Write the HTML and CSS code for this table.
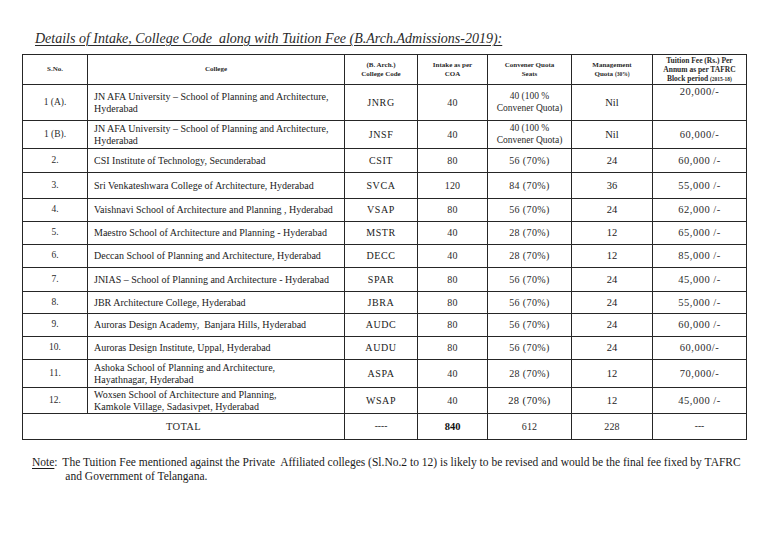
FILE: index.html
```html
<!DOCTYPE html>
<html>
<head>
<meta charset="utf-8">
<link rel="stylesheet" href="styles.css">
</head>
<body>
<div class="page">
  <h1 class="title">Details of Intake, College Code&nbsp; along with Tuition Fee (B.Arch.Admissions-2019):</h1>
  <table class="intake">
    <colgroup>
      <col class="c-sno"><col class="c-college"><col class="c-code"><col class="c-intake"><col class="c-conv"><col class="c-mgmt"><col class="c-fee">
    </colgroup>
    <thead>
      <tr class="h30">
        <th>S.No.</th>
        <th>College</th>
        <th>(B. Arch.)<br>College Code</th>
        <th>Intake as per<br>COA</th>
        <th>Convener Quota<br>Seats</th>
        <th>Management<br>Quota <span class="tiny">(30%)</span></th>
        <th class="fee-h">Tuition Fee (Rs.) Per<br>Annum as per TAFRC<br>Block period <span class="tiny">(2015-18)</span></th>
      </tr>
    </thead>
    <tbody>
      <tr class="h36">
        <td>1 (A).</td>
        <td class="name">JN AFA University – School of Planning and Architecture,<br>Hyderabad</td>
        <td class="code">JNRG</td>
        <td class="num">40</td>
        <td>40 (100 %<br>Convener Quota)</td>
        <td class="big">Nil</td>
        <td class="fee top">20,000/-</td>
      </tr>
      <tr class="h28">
        <td>1 (B).</td>
        <td class="name">JN AFA University – School of Planning and Architecture,<br>Hyderabad</td>
        <td class="code">JNSF</td>
        <td class="num">40</td>
        <td>40 (100 %<br>Convener Quota)</td>
        <td class="big">Nil</td>
        <td class="fee">60,000/-</td>
      </tr>
      <tr class="h24">
        <td>2.</td>
        <td class="name">CSI Institute of Technology, Secunderabad</td>
        <td class="code">CSIT</td>
        <td class="num">80</td>
        <td class="conv">56 (70%)</td>
        <td class="big">24</td>
        <td class="fee">60,000 /-</td>
      </tr>
      <tr class="h26">
        <td>3.</td>
        <td class="name">Sri Venkateshwara College of Architecture, Hyderabad</td>
        <td class="code">SVCA</td>
        <td class="num">120</td>
        <td class="conv">84 (70%)</td>
        <td class="big">36</td>
        <td class="fee">55,000 /-</td>
      </tr>
      <tr class="h23">
        <td>4.</td>
        <td class="name">Vaishnavi School of Architecture and Planning , Hyderabad</td>
        <td class="code">VSAP</td>
        <td class="num">80</td>
        <td class="conv">56 (70%)</td>
        <td class="big">24</td>
        <td class="fee">62,000 /-</td>
      </tr>
      <tr class="h23">
        <td>5.</td>
        <td class="name">Maestro School of Architecture and Planning - Hyderabad</td>
        <td class="code">MSTR</td>
        <td class="num">40</td>
        <td class="conv">28 (70%)</td>
        <td class="big">12</td>
        <td class="fee">65,000 /-</td>
      </tr>
      <tr class="h23">
        <td>6.</td>
        <td class="name">Deccan School of Planning and Architecture, Hyderabad</td>
        <td class="code">DECC</td>
        <td class="num">40</td>
        <td class="conv">28 (70%)</td>
        <td class="big">12</td>
        <td class="fee">85,000 /-</td>
      </tr>
      <tr class="h24">
        <td>7.</td>
        <td class="name">JNIAS – School of Planning and Architecture - Hyderabad</td>
        <td class="code">SPAR</td>
        <td class="num">80</td>
        <td class="conv">56 (70%)</td>
        <td class="big">24</td>
        <td class="fee">45,000 /-</td>
      </tr>
      <tr class="h22">
        <td>8.</td>
        <td class="name">JBR Architecture College, Hyderabad</td>
        <td class="code">JBRA</td>
        <td class="num">80</td>
        <td class="conv">56 (70%)</td>
        <td class="big">24</td>
        <td class="fee">55,000 /-</td>
      </tr>
      <tr class="h23">
        <td>9.</td>
        <td class="name">Auroras Design Academy,&nbsp; Banjara Hills, Hyderabad</td>
        <td class="code">AUDC</td>
        <td class="num">80</td>
        <td class="conv">56 (70%)</td>
        <td class="big">24</td>
        <td class="fee">60,000 /-</td>
      </tr>
      <tr class="h23">
        <td>10.</td>
        <td class="name">Auroras Design Institute, Uppal, Hyderabad</td>
        <td class="code">AUDU</td>
        <td class="num">80</td>
        <td class="conv">56 (70%)</td>
        <td class="big">24</td>
        <td class="fee">60,000/-</td>
      </tr>
      <tr class="h28">
        <td>11.</td>
        <td class="name">Ashoka School of Planning and Architecture,<br>Hayathnagar, Hyderabad</td>
        <td class="code">ASPA</td>
        <td class="num">40</td>
        <td class="conv">28 (70%)</td>
        <td class="big">12</td>
        <td class="fee">70,000/-</td>
      </tr>
      <tr class="h26">
        <td>12.</td>
        <td class="name">Woxsen School of Architecture and Planning,<br>Kamkole Village, Sadasivpet, Hyderabad</td>
        <td class="code">WSAP</td>
        <td class="num">40</td>
        <td class="conv big">28 (70%)</td>
        <td class="big">12</td>
        <td class="fee">45,000 /-</td>
      </tr>
      <tr class="h26">
        <td colspan="2" class="total">TOTAL</td>
        <td>----</td>
        <td class="sum">840</td>
        <td class="num">612</td>
        <td class="num">228</td>
        <td>---</td>
      </tr>
    </tbody>
  </table>
  <div class="note">
    <span class="note-label">Note</span><span class="note-colon">:</span>
    <p class="note-text">The Tuition Fee mentioned against the Private&nbsp; Affiliated colleges (Sl.No.2 to 12) is likely to be revised and would be the final fee fixed by TAFRC and Government of Telangana.</p>
  </div>
</div>
</body>
</html>
```

FILE: styles.css
```css
html, body {
  margin: 0;
  padding: 0;
  background: #ffffff;
}

.page {
  width: 768px;
  height: 544px;
  padding: 31px 0 0 22px;
  box-sizing: border-box;
  font-family: "Liberation Serif", "Times New Roman", serif;
  color: #1c1c1c;
}

.title {
  margin: 0 0 7px 13px;
  font-size: 14px;
  line-height: 16px;
  font-weight: normal;
  font-style: italic;
  text-decoration: underline;
  text-underline-offset: 2px;
  text-decoration-thickness: 1px;
  color: #2a2a2a;
  white-space: nowrap;
}

.intake {
  border-collapse: collapse;
  table-layout: fixed;
  width: 724px;
  border: 1.5px solid #1e1e1e;
}

.c-sno { width: 65px; }
.c-college { width: 257px; }
.c-code { width: 73px; }
.c-intake { width: 70px; }
.c-conv { width: 84px; }
.c-mgmt { width: 81px; }
.c-fee { width: 94px; }

.intake th,
.intake td {
  border: 1px solid #262626;
  padding: 0 2px;
  text-align: center;
  vertical-align: middle;
  overflow: hidden;
}

.intake th {
  font-size: 7px;
  line-height: 9px;
  font-weight: bold;
  color: #2a2a2a;
}

.intake th.fee-h {
  vertical-align: top;
  padding-top: 1px;
  font-size: 7.5px;
}

.tiny {
  font-size: 5.5px;
}

.intake td {
  font-size: 9.5px;
  line-height: 11.5px;
  color: #2b2b2b;
}

.intake td.name {
  text-align: left;
  padding-left: 6px;
  font-size: 10px;
  white-space: nowrap;
  color: #222;
}

.intake td.code {
  font-size: 10px;
  letter-spacing: 0.6px;
  color: #1a1a1a;
}

.intake td.num {
  font-size: 10px;
  letter-spacing: 0.2px;
}

.intake td.conv {
  font-size: 10px;
  letter-spacing: 0.4px;
}

.intake td.big {
  font-size: 10.5px;
  color: #1a1a1a;
}

.intake td.fee {
  font-size: 10.5px;
  letter-spacing: 0.5px;
}

.intake td.top {
  vertical-align: top;
  padding-top: 1px;
}

.intake td.total {
  font-size: 10.5px;
  letter-spacing: 0.3px;
}

.intake td.sum {
  font-weight: bold;
  font-size: 10.5px;
  color: #111;
}

.h22 { height: 22px; }
.h23 { height: 23px; }
.h24 { height: 24px; }
.h26 { height: 26px; }
.h28 { height: 28px; }
.h30 { height: 30px; }
.h36 { height: 36px; }

.note {
  display: flex;
  margin: 15px 0 0 10px;
  font-size: 11.5px;
  line-height: 14px;
  color: #1a1a1a;
}

.note-label {
  text-decoration: underline;
  text-underline-offset: 2px;
}

.note-colon {
  width: 8px;
  flex: none;
}

.note-text {
  margin: 0;
  width: 683px;
  padding-left: 3px;
  text-indent: -3px;
}
```
